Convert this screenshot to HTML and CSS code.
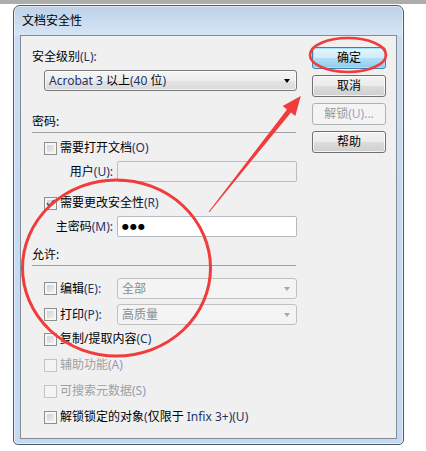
FILE: index.html
```html
<!DOCTYPE html>
<html lang="zh-CN">
<head>
<meta charset="utf-8">
<title>文档安全性</title>
<link rel="stylesheet" href="styles.css">
</head>
<body>
<div class="strip"></div>
<div class="window">
  <div class="titlebar"><span class="title">文档安全性</span></div>
  <div class="client">
    <div class="left">
      <div class="label l-level">安全级别<span class="m">(L):</span></div>
      <div class="select sel-level"><span class="m">Acrobat 3 </span>以上<span class="m">(40 </span>位<span class="m">)</span><i class="arrow"></i></div>
      <div class="label l-pass">密码:</div>
      <div class="sep"></div>
      <div class="row r-open"><span class="cb"></span><span class="txt">需要打开文档<span class="m">(O)</span></span></div>
      <div class="row field r-user"><span class="flabel">用户<span class="m">(U):</span></span><div class="input off"></div></div>
      <div class="row r-change"><span class="cb checked"><svg viewBox="0 0 13 13" width="13" height="13"><path d="M3 6.2 L5.4 9 L10 3" fill="none" stroke="#4b5d7e" stroke-width="1.8"/></svg></span><span class="txt">需要更改安全性<span class="m">(R)</span></span></div>
      <div class="row field r-master"><span class="flabel">主密码<span class="m">(M):</span></span><div class="input pw">●●●</div></div>
      <div class="label l-allow">允许:</div>
      <div class="sep"></div>
      <div class="row field r-edit"><span class="flabel left-l"><span class="cb"></span><span class="txt">编辑<span class="m">(E):</span></span></span><div class="select off"><span>全部</span><i class="arrow"></i></div></div>
      <div class="row field r-print"><span class="flabel left-l"><span class="cb"></span><span class="txt">打印<span class="m">(P):</span></span></span><div class="select off"><span>高质量</span><i class="arrow"></i></div></div>
      <div class="row tall r-copy"><span class="cb"></span><span class="txt">复制/提取内容<span class="m">(C)</span></span></div>
      <div class="row tall dis"><span class="cb"></span><span class="txt">辅助功能<span class="m">(A)</span></span></div>
      <div class="row tall dis"><span class="cb"></span><span class="txt">可搜索元数据<span class="m">(S)</span></span></div>
      <div class="row tall"><span class="cb"></span><span class="txt">解锁锁定的对象<span class="m">(</span>仅限于 <span class="m">Infix 3+)(U)</span></span></div>
    </div>
    <div class="right">
      <div class="btn default">确定</div>
      <div class="btn">取消</div>
      <div class="btn disabled">解锁<span class="m">(U)...</span></div>
      <div class="btn">帮助</div>
    </div>
  </div>
</div>
<svg class="annot" width="426" height="451" viewBox="0 0 426 451">
  <ellipse cx="348" cy="55" rx="38" ry="17" fill="none" stroke="#f03c3c" stroke-width="2.6"/>
  <ellipse cx="116.5" cy="268" rx="94" ry="88" fill="none" stroke="#f03c3c" stroke-width="3"/>
  <polygon points="208.6,211.7 287,109.4 282.7,106 300.8,96.1 295.3,116 291,112.6 209.4,212.3" fill="#f03c3c"/>
</svg>
</body>
</html>
```
FILE: styles.css
```css
body {
  margin: 0;
  width: 426px;
  height: 451px;
  overflow: hidden;
  position: relative;
  background: #fff;
  font-family: "Noto Sans", "Noto Sans CJK SC", sans-serif;
  font-size: 12px;
  line-height: 16px;
  color: #000;
}

.strip {
  height: 4px;
  background: #adadad;
}

.window {
  margin: 1px 0 0 13px;
  width: 391px;
  height: 440px;
  box-sizing: border-box;
  border: 1px solid #4f5a68;
  border-radius: 7px 7px 5px 5px;
  background: linear-gradient(#bcd1e8, #d6e5f5 29px, #c8dcf3 30px, #c4daf3);
  box-shadow: inset 0 0 0 1px rgba(255, 255, 255, 0.55);
  padding: 0 6px 5px 6px;
}

.titlebar {
  height: 29px;
  line-height: 29px;
  padding-left: 2px;
}

.title {
  font-size: 12px;
  color: #000;
}

.client {
  height: 404px;
  box-sizing: border-box;
  border: 1px solid #838c96;
  background: #f0f0f0;
  display: flex;
  padding-left: 11px;
}

.left {
  width: 265px;
  display: flex;
  flex-direction: column;
}

.right {
  width: 74px;
  margin-left: 15px;
  margin-top: 11px;
  display: flex;
  flex-direction: column;
  gap: 6px;
}

.m {
  color: #1f3468;
}

.label {
  height: 16px;
}

.l-level { margin-top: 13px; }
.l-pass { margin-top: 23px; }
.l-allow { margin-top: 10px; }

.sep {
  margin-top: 2px;
  width: 264px;
  height: 1px;
  background: #a0a0a0;
}

.select {
  display: flex;
  align-items: center;
  box-sizing: border-box;
  height: 21px;
  border: 1px solid #7a7a7a;
  border-radius: 3px;
  background: linear-gradient(#f5f5f5, #eeeeee 50%, #e4e4e4 50%, #dadada);
  box-shadow: inset 0 0 0 1px rgba(255, 255, 255, 0.7);
  padding: 0 6px 0 4px;
  white-space: pre;
}

.sel-level {
  margin: 5px 0 0 12px;
  width: 253px;
}

.arrow {
  margin-left: auto;
  width: 0;
  height: 0;
  border-top: 4px solid #000;
  border-left: 3.5px solid transparent;
  border-right: 3.5px solid transparent;
}

.select.off {
  width: 180px;
  border-color: #c0c0c0;
  background: #f4f4f4;
  color: #8c8c8c;
  box-shadow: none;
}

.select.off .arrow {
  border-top-color: #a8a8a8;
}

.row {
  display: flex;
  align-items: center;
  height: 16px;
  padding-left: 12px;
}

.row .txt {
  margin-left: 3px;
  white-space: nowrap;
}

.row.field {
  height: 21px;
  padding-left: 0;
}

.row.tall {
  height: 26px;
}

.r-open { margin-top: 7px; }
.r-user { margin-top: 5px; }
.r-change { margin-top: 13px; }
.r-master { margin-top: 5px; }
.r-edit { margin-top: 12px; }
.r-print { margin-top: 5px; }
.r-copy { margin-top: 1px; }

.flabel {
  width: 85px;
  box-sizing: border-box;
  padding-right: 4px;
  text-align: right;
  white-space: nowrap;
}

.flabel.left-l {
  display: flex;
  align-items: center;
  padding-left: 12px;
  text-align: left;
}

.input {
  width: 180px;
  height: 21px;
  box-sizing: border-box;
  border: 1px solid #b4b8bf;
  border-radius: 2px;
  background: #fff;
}

.input.off {
  border-color: #bcbcbc;
  background: #f0f0f0;
}

.input.pw {
  padding-left: 4px;
  font-family: "DejaVu Sans", sans-serif;
  font-size: 8px;
  line-height: 19px;
  letter-spacing: 1px;
}

.cb {
  flex: none;
  width: 13px;
  height: 13px;
  box-sizing: border-box;
  border: 1px solid #8e8f8f;
  background: linear-gradient(135deg, #c9cdd2, #f4f4f4);
  box-shadow: inset 0 0 0 2px #f6f6f6;
  position: relative;
}

.cb.checked svg {
  position: absolute;
  left: -1px;
  top: -1px;
}

.row.dis {
  color: #a0a0a0;
}

.row.dis .m {
  color: #8e9ab8;
}

.row.dis .cb {
  border-color: #c4c4c4;
  background: #f4f4f4;
  box-shadow: none;
}

.btn {
  height: 22px;
  box-sizing: border-box;
  border: 1px solid #707070;
  border-radius: 3px;
  background: linear-gradient(#f3f3f3, #ebebeb 50%, #dddddd 50%, #cfcfcf);
  box-shadow: inset 0 0 0 1px rgba(255, 255, 255, 0.75);
  text-align: center;
  line-height: 20px;
}

.btn.default {
  border-color: #3c7fb1;
  background: linear-gradient(#e6f5fd, #cfebfa 50%, #b2e0f7 50%, #8ccced);
  box-shadow: inset 0 0 0 1px #a8e2fa;
}

.btn.disabled {
  border-color: #adb2b5;
  background: #f4f4f4;
  color: #9a9a9a;
  box-shadow: none;
}

.btn.disabled .m {
  color: #9aa3b8;
}

.annot {
  position: absolute;
  left: 0;
  top: 0;
  pointer-events: none;
}
```
